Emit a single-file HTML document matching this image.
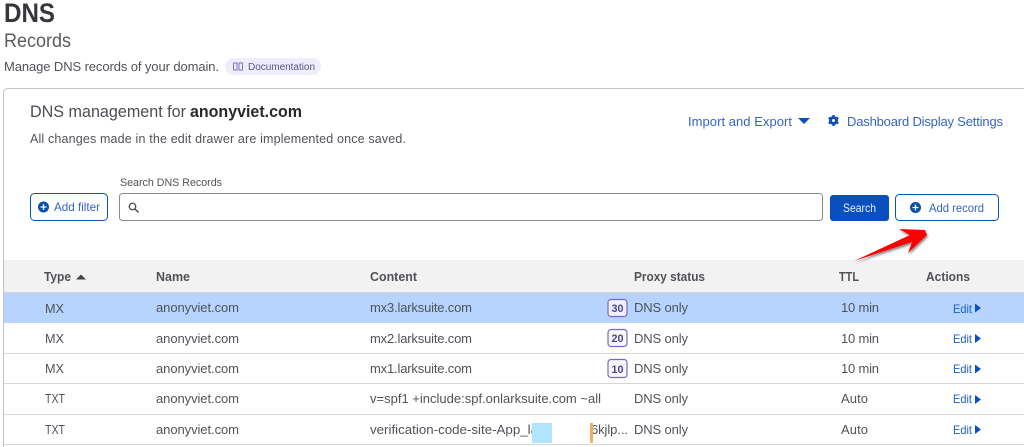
<!DOCTYPE html>
<html><head><meta charset="utf-8"><style>
html,body{margin:0;padding:0;background:#fff;width:1024px;height:447px;overflow:hidden}
svg{display:block;position:absolute;left:0;top:0}
text{font-family:"Liberation Sans",sans-serif;font-size:13px;fill:#505358}
.b{fill:#3564c6}.l{fill:#1a5fc8;font-size:12px}.h{font-weight:bold;fill:#505256;font-size:12.5px}
.n{font-size:11px;font-weight:bold;fill:#4a4590}
</style></head><body>
<svg width="1024" height="447" viewBox="0 0 1024 447" xmlns="http://www.w3.org/2000/svg">
<defs><filter id="sh" x="-20%" y="-20%" width="140%" height="150%"><feDropShadow dx="1" dy="2" stdDeviation="1" flood-color="#000" flood-opacity=".45"/></filter></defs>
<text x="4" y="22" textLength="51" lengthAdjust="spacingAndGlyphs" style="font-size:27px;font-weight:bold;fill:#36373b">DNS</text>
<text x="4" y="47" textLength="67" lengthAdjust="spacingAndGlyphs" style="font-size:19px;fill:#5a5c60">Records</text>
<text x="4" y="71" textLength="215" style="font-size:13px">Manage DNS records of your domain.</text>
<rect x="225" y="58" width="96" height="17" rx="8.500" fill="#efedfb"/>
<path d="M233.500 63h3.500v7h-3.500zM239 63h3.500v7h-3.500z" fill="none" stroke="#7a75c5"/>
<text x="248" y="70" textLength="67" style="font-size:10px;fill:#55558a">Documentation</text>

<rect x="3.500" y="88.500" width="1040" height="380" rx="4" fill="#fff" stroke="#c4c4c4"/>
<text x="30" y="117" textLength="156" lengthAdjust="spacingAndGlyphs" style="font-size:16.500px;fill:#4a4d52">DNS management for</text>
<text x="190" y="117" textLength="112" lengthAdjust="spacingAndGlyphs" style="font-size:16.500px;font-weight:bold;fill:#28292c">anonyviet.com</text>
<text x="30" y="143" textLength="376" style="font-size:12.500px">All changes made in the edit drawer are implemented once saved.</text>

<text x="688" y="126" textLength="104" class="b">Import and Export</text>
<path d="M798 118h12l-6 6z" fill="#0a4fbd"/>
<circle cx="833.500" cy="120.500" r="3" fill="none" stroke="#0a4fbd" stroke-width="3"/>
<path d="M833.500 115v2.500M833.500 123.500v2.500M828.700 117.700l2.200 1.300M836.100 122l2.200 1.300M828.700 123.300l2.200-1.300M836.100 119l2.200-1.300" stroke="#0a4fbd" stroke-width="2.200"/>
<text x="847" y="126" textLength="156" class="b">Dashboard Display Settings</text>

<text x="120" y="186" textLength="102" lengthAdjust="spacingAndGlyphs" style="font-size:11px">Search DNS Records</text>
<rect x="30.500" y="193.500" width="77" height="27" rx="4" fill="#fff" stroke="#0a55b5"/>
<circle cx="43.500" cy="207" r="5.500" fill="#0a4fa8"/>
<path d="M40.500 207h6M43.500 204v6" stroke="#fff" stroke-width="1.300"/>
<text x="54" y="211" textLength="46" lengthAdjust="spacingAndGlyphs" style="font-size:12px" class="b">Add filter</text>
<rect x="119.500" y="193.500" width="703" height="27" rx="3" fill="#fff" stroke="#8a8a8a"/>
<circle cx="132.500" cy="206.500" r="3.300" fill="none" stroke="#444" stroke-width="1.200"/>
<path d="M135 209l3.500 3.500" stroke="#444" stroke-width="1.400"/>
<rect x="830" y="195" width="59" height="26" rx="3" fill="#0a4fc0"/>
<text x="843" y="212" textLength="33" lengthAdjust="spacingAndGlyphs" style="font-size:12px;fill:#e8f0ff">Search</text>
<rect x="895.500" y="194.500" width="103" height="26" rx="4" fill="#fff" stroke="#0a55b5"/>
<circle cx="915.500" cy="207.500" r="5.500" fill="#0a4fa8"/>
<path d="M912.500 207.500h6M915.500 204.500v6" stroke="#fff" stroke-width="1.300"/>
<text x="929" y="212" textLength="55" lengthAdjust="spacingAndGlyphs" style="font-size:12px" class="b">Add record</text>

<rect x="4" y="260" width="1020" height="32" fill="#f2f2f2"/>
<rect x="4" y="293" width="1020" height="30" fill="#b6d4fe"/>
<path d="M4 292.500h1020M4 353.500h1020M4 383.500h1020M4 414.500h1020M4 444.500h1020" stroke="#d6d6d6"/>

<text x="44" y="281" textLength="27" lengthAdjust="spacingAndGlyphs" class="h">Type</text>
<path d="M76 279.500l5-5 5 5z" fill="#444"/>
<text x="156" y="281" textLength="34" lengthAdjust="spacingAndGlyphs" class="h">Name</text>
<text x="370" y="281" textLength="47" lengthAdjust="spacingAndGlyphs" class="h">Content</text>
<text x="634" y="281" textLength="71" lengthAdjust="spacingAndGlyphs" class="h">Proxy status</text>
<text x="839" y="281" textLength="20" lengthAdjust="spacingAndGlyphs" class="h">TTL</text>
<text x="926" y="281" textLength="44" lengthAdjust="spacingAndGlyphs" class="h">Actions</text>

<text x="45" y="313" textLength="19" lengthAdjust="spacingAndGlyphs">MX</text><text x="156" y="312" textLength="83">anonyviet.com</text><text x="370" y="312" textLength="102">mx3.larksuite.com</text><text x="634" y="312" textLength="54">DNS only</text><text x="841" y="312" textLength="38">10 min</text>
<text x="45" y="343" textLength="19" lengthAdjust="spacingAndGlyphs">MX</text><text x="156" y="343" textLength="83">anonyviet.com</text><text x="370" y="343" textLength="102">mx2.larksuite.com</text><text x="634" y="343" textLength="54">DNS only</text><text x="841" y="343" textLength="38">10 min</text>
<text x="45" y="373" textLength="19" lengthAdjust="spacingAndGlyphs">MX</text><text x="156" y="373" textLength="83">anonyviet.com</text><text x="370" y="373" textLength="102">mx1.larksuite.com</text><text x="634" y="373" textLength="54">DNS only</text><text x="841" y="373" textLength="38">10 min</text>
<text x="45" y="403" textLength="20" lengthAdjust="spacingAndGlyphs">TXT</text><text x="156" y="403" textLength="83">anonyviet.com</text><text x="370" y="403" textLength="231">v=spf1 +include:spf.onlarksuite.com ~all</text><text x="634" y="403" textLength="54">DNS only</text><text x="841" y="403" textLength="27">Auto</text>
<text x="45" y="434" textLength="20" lengthAdjust="spacingAndGlyphs">TXT</text><text x="156" y="434" textLength="83">anonyviet.com</text><text x="370" y="434" textLength="168" lengthAdjust="spacingAndGlyphs">verification-code-site-App_la</text><text x="591" y="434" textLength="37">6kjlp...</text><text x="634" y="434" textLength="54">DNS only</text><text x="841" y="434" textLength="27">Auto</text>
<rect x="532" y="423" width="20" height="20" fill="#b0e4ff"/>
<rect x="590" y="423" width="3" height="20" fill="#eeb064"/>

<rect x="608" y="299.500" width="19" height="17" rx="3" fill="#f2f0fc" stroke="#7a66c8" stroke-width="1.200"/><text x="611.500" y="312" textLength="12" class="n" lengthAdjust="spacingAndGlyphs">30</text>
<rect x="608" y="329.500" width="19" height="17" rx="3" fill="#f8f7fe" stroke="#7a66c8" stroke-width="1.200"/><text x="611.500" y="342" textLength="12" class="n" lengthAdjust="spacingAndGlyphs">20</text>
<rect x="608" y="359.500" width="19" height="18" rx="3" fill="#f8f7fe" stroke="#7a66c8" stroke-width="1.200"/><text x="611.500" y="373" textLength="12" class="n" lengthAdjust="spacingAndGlyphs">10</text>

<text x="953" y="313" textLength="19" lengthAdjust="spacingAndGlyphs" class="l">Edit</text><path d="M975 303.500l6 4.500-6 4.500z" fill="#0a4fc0"/>
<text x="953" y="343" textLength="19" lengthAdjust="spacingAndGlyphs" class="l">Edit</text><path d="M975 334l6 4.500-6 4.500z" fill="#0a4fc0"/>
<text x="953" y="373" textLength="19" lengthAdjust="spacingAndGlyphs" class="l">Edit</text><path d="M975 364.500l6 4.500-6 4.500z" fill="#0a4fc0"/>
<text x="953" y="403" textLength="19" lengthAdjust="spacingAndGlyphs" class="l">Edit</text><path d="M975 395l6 4.500-6 4.500z" fill="#0a4fc0"/>
<text x="953" y="434" textLength="19" lengthAdjust="spacingAndGlyphs" class="l">Edit</text><path d="M975 425l6 4.500-6 4.500z" fill="#0a4fc0"/>

<path d="M854 261L910 235 899 229 925 230 927 235 908 253 912 242Z" fill="#fb0606" filter="url(#sh)"/>
</svg>
</body></html>
